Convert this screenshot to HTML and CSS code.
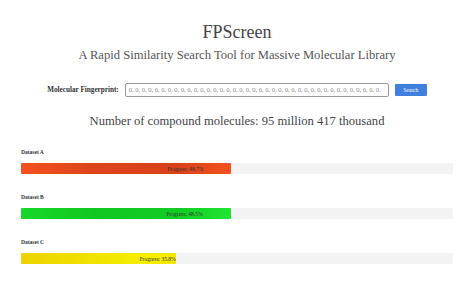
FILE: index.html
```html
<!DOCTYPE html>
<html>
<head>
<meta charset="utf-8">
<link rel="stylesheet" href="styles.css">
</head>
<body>
<div class="page">
  <h1 class="title">FPScreen</h1>
  <h2 class="subtitle">A Rapid Similarity Search Tool for Massive Molecular Library</h2>
  <div class="search">
    <label class="search-label">Molecular Fingerprint:</label>
    <div class="search-input">0, 0, 0, 0, 0, 0, 0, 0, 0, 0, 0, 0, 0, 0, 0, 0, 0, 0, 0, 0, 0, 0, 0, 0, 0, 0, 0, 0, 0, 0, 0, 0, 0, 0, 0, 0, 0, 0, 0,</div>
    <button class="search-btn">Search</button>
  </div>
  <div class="count">Number of compound molecules: 95 million 417 thousand</div>
  <div class="datasets">
    <div class="dataset">
      <div class="ds-label">Dataset A</div>
      <div class="track"><div class="fill fill-a" style="width:48.7%"><span class="ptext pad">Progress: 48.7%</span></div></div>
    </div>
    <div class="dataset">
      <div class="ds-label">Dataset B</div>
      <div class="track"><div class="fill fill-b" style="width:48.5%"><span class="ptext pad">Progress: 48.5%</span></div></div>
    </div>
    <div class="dataset">
      <div class="ds-label">Dataset C</div>
      <div class="track"><div class="fill fill-c" style="width:35.8%"><span class="ptext">Progress: 35.8%</span></div></div>
    </div>
  </div>
</div>
</body>
</html>
```
FILE: styles.css
```css
html, body {
  margin: 0;
  padding: 0;
  background: #ffffff;
}
body {
  font-family: "Liberation Serif", "Times New Roman", serif;
  color: #444444;
}
.page {
  width: 474px;
  padding-top: 21px;
}
.title {
  margin: 0;
  font-size: 18px;
  line-height: 22px;
  font-weight: normal;
  text-align: center;
  color: #444;
}
.subtitle {
  margin: 4px 0 0;
  font-size: 12.6px;
  line-height: 16px;
  font-weight: normal;
  text-align: center;
  color: #555;
}
.search {
  margin-top: 20px;
  display: flex;
  justify-content: center;
  align-items: center;
  height: 14px;
}
.search-label {
  font-size: 7.2px;
  font-weight: bold;
  color: #333;
  margin-right: 6px;
  white-space: nowrap;
}
.search-input {
  box-sizing: border-box;
  width: 264px;
  height: 14px;
  border: 1px solid #9a9a9a;
  border-radius: 2px;
  font-size: 6.5px;
  line-height: 12px;
  color: #8a8a8a;
  padding: 0 3px;
  overflow: hidden;
  white-space: nowrap;
}
.search-btn {
  margin-left: 6px;
  width: 32px;
  height: 12px;
  padding: 0;
  border: none;
  border-radius: 1px;
  background: #3f7fde;
  color: #fff;
  font-family: "Liberation Serif", serif;
  font-size: 5.5px;
}
.count {
  margin-top: 15px;
  font-size: 12.6px;
  line-height: 18px;
  text-align: center;
  color: #444;
}
.datasets {
  padding: 18px 21px 0;
  display: flex;
  flex-direction: column;
  gap: 19px;
}
.ds-label {
  font-size: 5.5px;
  line-height: 8px;
  font-weight: bold;
  color: #333;
  margin-bottom: 7px;
}
.track {
  height: 11px;
  background: #f3f3f3;
  border-radius: 1px;
  display: flex;
}
.fill {
  height: 11px;
  display: flex;
  justify-content: flex-end;
  align-items: center;
  border-radius: 1px;
}
.fill-a {
  background: linear-gradient(to right, #f4511f, #dc431b 35%, #d9411a 75%, #f3521f);
}
.fill-b {
  background: linear-gradient(to right, #18d82a, #10c722 35%, #12cc24 75%, #1fe632);
}
.fill-c {
  background: linear-gradient(to right, #eed400, #f0e000 40%, #f5ef00 80%, #f2e600);
}
.ptext {
  font-size: 5.5px;
  color: #333;
  white-space: nowrap;
}
.ptext.pad {
  padding-right: 28px;
}
```
